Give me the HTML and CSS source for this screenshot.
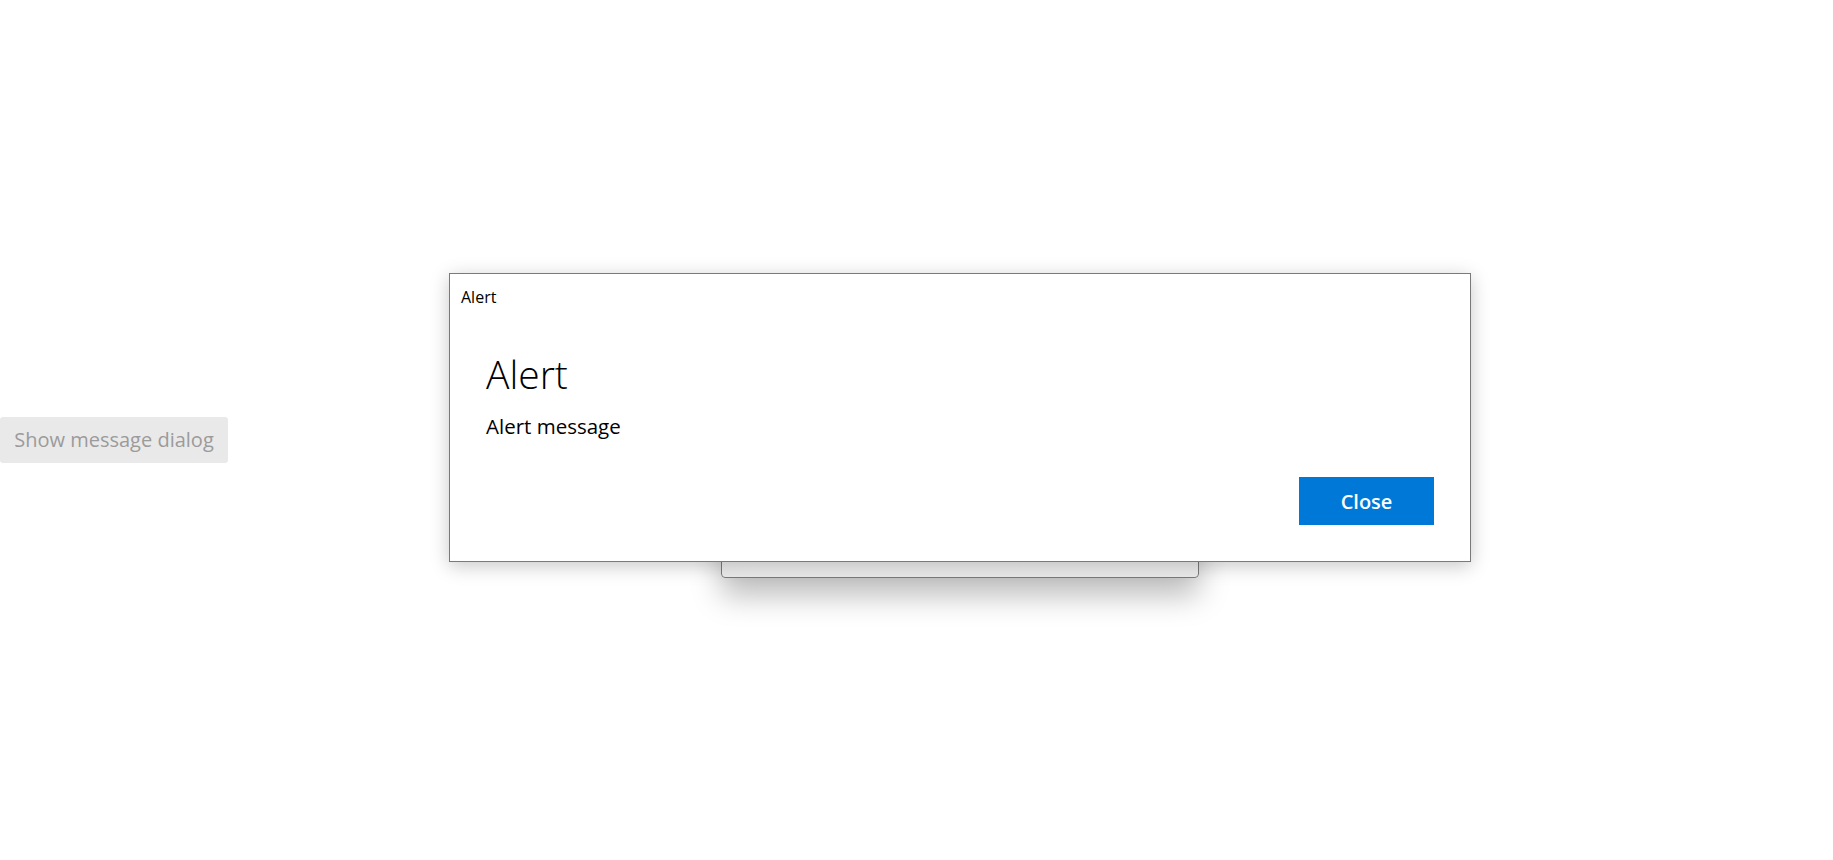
FILE: index.html
```html
<!DOCTYPE html>
<html lang="en">
<head>
<meta charset="utf-8">
<title>Alert</title>
<link rel="stylesheet" href="styles.css">
</head>
<body>
<main class="page">
  <button class="show-btn" type="button">Show message dialog</button>
</main>
<div class="back-panel"></div>
<section class="dialog" role="alertdialog" aria-labelledby="dlg-h">
  <div class="dialog-title">Alert</div>
  <div class="dialog-body">
    <h1 id="dlg-h" class="dialog-heading">Alert</h1>
    <p class="dialog-message">Alert message</p>
    <div class="dialog-actions">
      <button class="close-btn" type="button">Close</button>
    </div>
  </div>
</section>
</body>
</html>
```

FILE: styles.css
```css
html, body {
  margin: 0;
  padding: 0;
  background: #ffffff;
}

body {
  font-family: "Open Sans", "Noto Sans", sans-serif;
  color: #000;
  width: 1833px;
  height: 860px;
  overflow: hidden;
  position: relative;
}

.page {
  padding-top: 417px;
}

.show-btn {
  display: flex;
  align-items: center;
  justify-content: center;
  box-sizing: border-box;
  width: 228px;
  height: 46px;
  padding: 0;
  border: none;
  border-radius: 3px;
  background: #e9e9e9;
  color: #9b9b9b;
  font-family: "Open Sans", "Noto Sans", sans-serif;
  font-size: 20px;
  line-height: 28px;
  white-space: nowrap;
}

.back-panel {
  position: absolute;
  left: 721px;
  top: 300px;
  width: 478px;
  height: 278px;
  box-sizing: border-box;
  border: 1px solid #7a7a7a;
  border-radius: 4px;
  background: linear-gradient(to bottom, #f6f6f6 0%, #f4f4f4 93%, #ebebeb 100%);
  box-shadow: 0 18px 30px rgba(0, 0, 0, 0.26);
}

.dialog {
  position: absolute;
  left: 449px;
  top: 273px;
  width: 1022px;
  height: 289px;
  box-sizing: border-box;
  border: 1px solid #7a7a7a;
  background: #ffffff;
  box-shadow: 0 4px 18px rgba(0, 0, 0, 0.22);
}

.dialog-title {
  padding: 13px 0 0 11px;
  font-size: 16px;
  line-height: 20px;
  color: #000;
}

.dialog-body {
  padding: 44px 36px 0 36px;
}

.dialog-heading {
  margin: 0;
  font-size: 39px;
  line-height: 45px;
  font-weight: 300;
  color: #000;
}

.dialog-message {
  margin: 16px 0 0;
  font-size: 20.5px;
  line-height: 28px;
  color: #000;
}

.dialog-actions {
  display: flex;
  justify-content: flex-end;
  margin-top: 37px;
}

.close-btn {
  display: flex;
  align-items: center;
  justify-content: center;
  width: 135px;
  height: 48px;
  border: none;
  background: #0078d7;
  color: #ffffff;
  font-family: "Open Sans", "Noto Sans", sans-serif;
  font-size: 20px;
  line-height: 28px;
  font-weight: 600;
  padding: 2px 0 0;
}
```
